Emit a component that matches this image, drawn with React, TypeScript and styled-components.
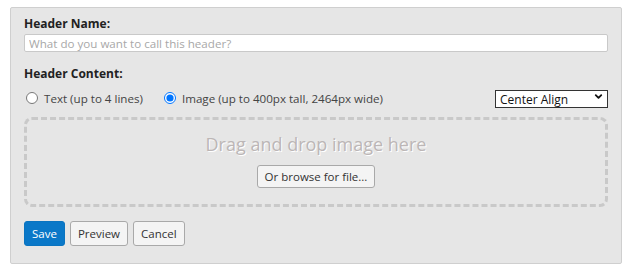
import React from "react";
import styled, { createGlobalStyle } from "styled-components";
import { ChevronDown } from "lucide-react";

const GlobalStyle = createGlobalStyle`
  body {
    margin: 0;
    background: #ffffff;
    font-family: "Open Sans", "Noto Sans", sans-serif;
    color: #333333;
  }
`;

export default function App() {
  return (
    <>
      <GlobalStyle />
      <Panel>
        <Label>Header Name:</Label>
        <TextInput placeholder="What do you want to call this header?" />
        <Label $spaced>Header Content:</Label>
        <OptionsRow>
          <RadioLabel>
            <Radio type="radio" name="kind" />
            Text (up to 4 lines)
          </RadioLabel>
          <RadioLabel>
            <Radio type="radio" name="kind" defaultChecked />
            Image (up to 400px tall, 2464px wide)
          </RadioLabel>
          <SelectWrap>
            <Select defaultValue="center">
              <option value="left">Left Align</option>
              <option value="center">Center Align</option>
              <option value="right">Right Align</option>
            </Select>
            <Chevron size={11} strokeWidth={4} />
          </SelectWrap>
        </OptionsRow>
        <DropZone>
          <DropText>Drag and drop image here</DropText>
          <Button $small>Or browse for file...</Button>
        </DropZone>
        <Actions>
          <Button $primary>Save</Button>
          <Button>Preview</Button>
          <Button>Cancel</Button>
        </Actions>
      </Panel>
    </>
  );
}

const Panel = styled.div`
  box-sizing: border-box;
  width: 612px;
  margin: 7px 0 0 10px;
  padding: 8px 13px 17px 13px;
  background: #e6e6e6;
  border: 1px solid #cfcfcf;
  border-radius: 2px;
`;

const Label = styled.div<{ $spaced?: boolean }>`
  font-size: 12px;
  font-weight: 700;
  line-height: 16px;
  color: #222;
  margin-top: ${(p) => (p.$spaced ? "14px" : "0")};
`;

const TextInput = styled.input`
  display: block;
  box-sizing: border-box;
  width: 584px;
  height: 18px;
  margin-top: 2px;
  padding: 0 4px;
  border: 1px solid #c9c9c9;
  border-radius: 2px;
  background: #fff;
  font-family: inherit;
  font-size: 11.6px;
  outline: none;

  &::placeholder {
    color: #a8a8a8;
  }
`;

const OptionsRow = styled.div`
  display: flex;
  align-items: center;
  height: 18px;
  margin-top: 7px;
  width: 584px;
`;

const RadioLabel = styled.label`
  display: flex;
  align-items: center;
  gap: 6px;
  font-size: 11.6px;
  color: #444;
  margin-right: 19px;
`;

const Radio = styled.input`
  width: 12px;
  height: 12px;
  margin: 0 0 0 2px;
`;

const SelectWrap = styled.div`
  position: relative;
  margin-left: auto;
`;

const Select = styled.select`
  appearance: none;
  box-sizing: border-box;
  width: 113px;
  height: 18px;
  padding: 0 0 0 4px;
  border: 1px solid #333;
  border-radius: 0;
  background: #fff;
  font-family: inherit;
  font-size: 12px;
  color: #111;
`;

const Chevron = styled(ChevronDown)`
  position: absolute;
  right: 4px;
  top: 4px;
  color: #111;
  pointer-events: none;
`;

const DropZone = styled.div`
  box-sizing: border-box;
  width: 584px;
  height: 90px;
  margin-top: 10px;
  border: 3px dashed #c9c9c9;
  border-radius: 8px;
  display: flex;
  flex-direction: column;
  align-items: center;
  padding-top: 12px;
  gap: 9px;
`;

const DropText = styled.div`
  font-size: 18px;
  line-height: 24px;
  color: #bcb6b6;
  text-shadow: 1px 1px 0 #ffffff;
`;

const Button = styled.button<{ $primary?: boolean; $small?: boolean }>`
  box-sizing: border-box;
  height: ${(p) => (p.$small ? "23px" : "25px")};
  padding: 0 7px;
  font-family: inherit;
  font-size: 11.5px;
  border-radius: 3px;
  border: 1px solid ${(p) => (p.$primary ? "#0a74c0" : "#a9a9a9")};
  background: ${(p) => (p.$primary ? "#0a78c8" : "#f4f4f4")};
  color: ${(p) => (p.$primary ? "#ffffff" : "#333333")};
`;

const Actions = styled.div`
  display: flex;
  gap: 5px;
  margin-top: 14px;
`;
